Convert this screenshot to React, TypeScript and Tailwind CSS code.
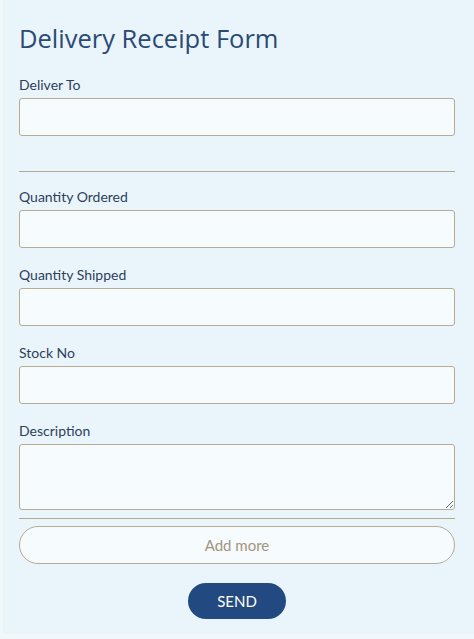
import { useState } from "react";

const fields = ["Quantity Ordered", "Quantity Shipped", "Stock No"];

function Field({ label, tall }: { label: string; tall?: boolean }) {
  const [value, setValue] = useState<string>('');
  return (
    <div className="flex flex-col">
      <label className="h-5 mb-[3px] text-[14px] leading-5 text-[#2d3f5c]" style={{ fontFamily: '"Lato", "Noto Sans", sans-serif' }}>{label}</label>
      {tall ? (
        <textarea
          className="h-[66px] w-full rounded-[3px] border border-[#b9ab92] bg-[#f6fbfd] px-2 py-1 text-sm outline-none"
          value={value}
          onChange={(e) => setValue(e.target.value)}
        />
      ) : (
        <input
          type="text"
          className="h-[38px] w-full rounded-[3px] border border-[#b9ab92] bg-[#f6fbfd] px-2 text-sm outline-none"
          value={value}
          onChange={(e) => setValue(e.target.value)}
        />
      )}
    </div>
  );
}

function App() {
  return (
    <div className="w-[474px] h-[639px] bg-[#eaf5fb] border-l-[3px] border-l-[#f1f8fc] border-b-[5px] border-b-[#f1f8fc]">
      <div className="pl-[16px] pr-[19px] pt-[21px]">
        <h1 className="text-[25.5px] leading-[34px] text-[#2b4a74] mb-5" style={{ fontFamily: '"Open Sans", sans-serif' }}>
          Delivery Receipt Form
        </h1>

        <Field label="Deliver To" />

        <div className="mt-[35px] mb-[15px] border-t border-[#b3a994]" />

        <div className="flex flex-col gap-[17px]">
          {fields.map((f) => (
            <Field label={f} key={f} />
          ))}
          <Field label="Description" tall />
        </div>

        <div className="mt-[8px] border-t border-[#b3a994]" />

        <button className="mt-[7px] h-[38px] w-full rounded-full border border-[#b9ab92] bg-[#f6fbfd] text-[15px] text-[#a3947e]" style={{ fontFamily: '"Lato", sans-serif' }}>
          Add more
        </button>

        <div className="flex justify-center mt-[19px]">
          <button className="h-[36px] w-[98px] rounded-full bg-[#234a80] text-[15px] text-white" style={{ fontFamily: '"Lato", sans-serif' }}>
            SEND
          </button>
        </div>
      </div>
    </div>
  );
}

export default App;
